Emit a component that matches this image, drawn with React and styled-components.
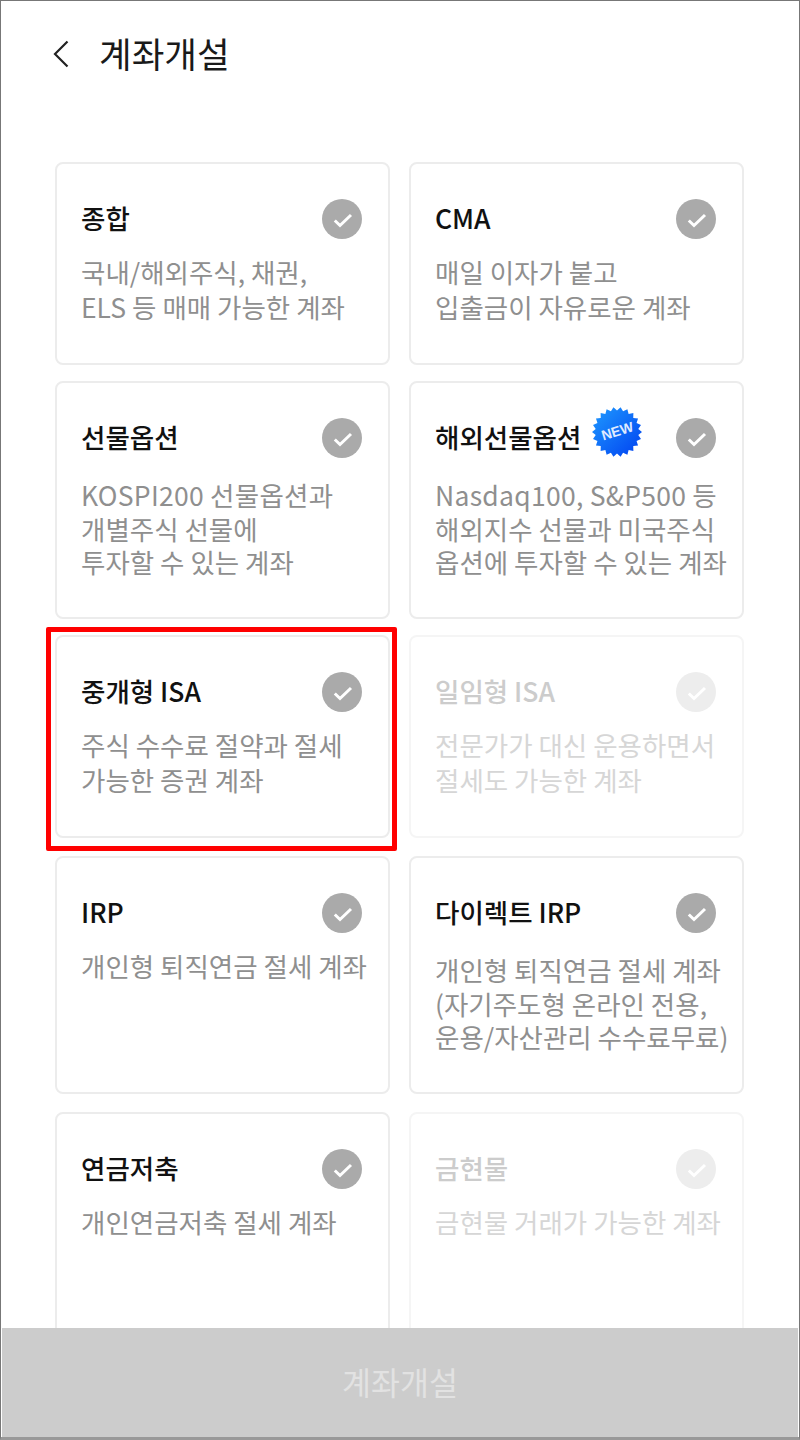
import React from 'react';
import styled, { createGlobalStyle } from 'styled-components';

const GlobalStyle = createGlobalStyle`
  html, body {
    margin: 0;
    padding: 0;
    background: #fff;
  }
  body {
    font-family: "Noto Sans CJK KR", "Noto Sans", sans-serif;
  }
`;

const rows = [
  {
    height: 203,
    gapAfter: 16,
    cards: [
      { title: '종합', lines: ['국내/해외주식, 채권,', 'ELS 등 매매 가능한 계좌'] },
      { title: 'CMA', lines: ['매일 이자가 붙고', '입출금이 자유로운 계좌'] },
    ],
  },
  {
    height: 238,
    gapAfter: 16,
    cards: [
      { title: '선물옵션', lines: ['KOSPI200 선물옵션과', '개별주식 선물에', '투자할 수 있는 계좌'] },
      { title: '해외선물옵션', isNew: true, lines: ['Nasdaq100, S&P500 등', '해외지수 선물과 미국주식', '옵션에 투자할 수 있는 계좌'] },
    ],
  },
  {
    height: 203,
    gapAfter: 18,
    cards: [
      { title: '중개형 ISA', marked: true, lines: ['주식 수수료 절약과 절세', '가능한 증권 계좌'] },
      { title: '일임형 ISA', disabled: true, lines: ['전문가가 대신 운용하면서', '절세도 가능한 계좌'] },
    ],
  },
  {
    height: 238,
    gapAfter: 18,
    cards: [
      { title: 'IRP', lines: ['개인형 퇴직연금 절세 계좌'] },
      { title: '다이렉트 IRP', lines: ['개인형 퇴직연금 절세 계좌', '(자기주도형 온라인 전용,', '운용/자산관리 수수료무료)'] },
    ],
  },
  {
    height: 238,
    gapAfter: 0,
    cards: [
      { title: '연금저축', lines: ['개인연금저축 절세 계좌'] },
      { title: '금현물', disabled: true, lines: ['금현물 거래가 가능한 계좌'] },
    ],
  },
];

// 뱃지 톱니 모양 좌표
const badgePoints = () => {
  const pts = [];
  const teeth = 22;
  for (let i = 0; i < teeth * 2; i++) {
    const r = i % 2 === 0 ? 25 : 21.5;
    const a = (Math.PI * i) / teeth;
    pts.push(`${(25 + r * Math.cos(a)).toFixed(2)},${(25 + r * Math.sin(a)).toFixed(2)}`);
  }
  return pts.join(' ');
};

function CheckMark({ disabled }) {
  return (
    <CheckCircle $disabled={disabled}>
      <svg width="24" height="24" viewBox="0 0 24 24" fill="none">
        <path d="M4.8 13.5 L10 18.5 L21 8" stroke="#fff" strokeWidth="3" />
      </svg>
    </CheckCircle>
  );
}

function NewBadge() {
  return (
    <Badge>
      <svg width="50" height="50" viewBox="0 0 50 50">
        <defs>
          <linearGradient id="badgeFill" x1="0" y1="0" x2="1" y2="1">
            <stop offset="0" stopColor="#1f9bff" />
            <stop offset="1" stopColor="#0040f0" />
          </linearGradient>
        </defs>
        <polygon points={badgePoints()} fill="url(#badgeFill)" />
      </svg>
      <BadgeText>NEW</BadgeText>
    </Badge>
  );
}

function AccountCard({ card }) {
  return (
    <Card $disabled={card.disabled} $marked={card.marked}>
      <CardHead>
        <CardTitle $disabled={card.disabled}>{card.title}</CardTitle>
        {card.isNew && <NewBadge />}
        <CheckMark disabled={card.disabled} />
      </CardHead>
      <CardText $disabled={card.disabled} $dense={card.lines.length === 3}>
        {card.lines.map((line) => (
          <TextLine key={line} $wide={/[A-Za-z]{4}/.test(line)}>{line}</TextLine>
        ))}
      </CardText>
    </Card>
  );
}

export default function App() {
  return (
    <Screen>
      <GlobalStyle />
      <Header>
        <BackButton>
          <svg width="18" height="30" viewBox="0 0 18 30" fill="none">
            <path d="M15.5 2.5 L3 15 L15.5 27.5" stroke="#222" strokeWidth="2.2" />
          </svg>
        </BackButton>
        <PageTitle>계좌개설</PageTitle>
      </Header>
      <CardList>
        {rows.map((row) => (
          <CardRow key={row.cards[0].title} $height={row.height} $gapAfter={row.gapAfter}>
            {row.cards.map((card) => (
              <AccountCard key={card.title} card={card} />
            ))}
          </CardRow>
        ))}
      </CardList>
      <SubmitBar>계좌개설</SubmitBar>
    </Screen>
  );
}

// - estilos

const Screen = styled.div`
  position: relative;
  box-sizing: border-box;
  width: 800px;
  height: 1440px;
  overflow: hidden;
  background: #fff;
  border: 1px solid #777;
  border-bottom: 3px solid #999;
`;

const Header = styled.header`
  display: flex;
  align-items: center;
  height: 106px;
  padding-left: 51px;
`;

const BackButton = styled.div`
  display: flex;
  width: 47px;
`;

const PageTitle = styled.h1`
  margin: -3px 0 0;
  font-size: 35.5px;
  font-weight: 400;
  color: #1a1a1a;
  line-height: 1;
`;

const CardList = styled.div`
  padding: 55px 55px 0 54px;
`;

const CardRow = styled.div`
  display: grid;
  grid-template-columns: 335px 335px;
  column-gap: 19px;
  height: ${(p) => p.$height}px;
  margin-bottom: ${(p) => p.$gapAfter}px;
`;

const Card = styled.div`
  position: relative;
  box-sizing: border-box;
  padding: 35px 26px 0 24px;
  border: 2px solid ${(p) => (p.$disabled ? '#f5f5f5' : '#ececec')};
  border-radius: 8px;
  background: #fff;

  ${(p) =>
    p.$marked &&
    `
    &::after {
      content: '';
      position: absolute;
      top: -10px;
      left: -11px;
      right: -9px;
      bottom: -15px;
      border: 5px solid #f00;
      border-radius: 2px;
    }
  `}
`;

const CardHead = styled.div`
  display: flex;
  align-items: center;
  height: 40px;
`;

const CardTitle = styled.div`
  margin-top: -4px;
  font-size: 26.5px;
  font-weight: 500;
  color: ${(p) => (p.$disabled ? '#ccc' : '#111')};
`;

const CheckCircle = styled.div`
  display: flex;
  align-items: center;
  justify-content: center;
  width: 40px;
  height: 40px;
  margin-left: auto;
  border-radius: 50%;
  background: ${(p) => (p.$disabled ? '#ededed' : '#aaa')};
`;

const Badge = styled.div`
  position: relative;
  width: 50px;
  height: 50px;
  margin: -12px 0 0 11px;
`;

const BadgeText = styled.span`
  position: absolute;
  top: 15px;
  left: 9px;
  font-family: "Liberation Sans", sans-serif;
  font-size: 14px;
  font-weight: 700;
  line-height: 18px;
  color: #dfeaff;
  transform: rotate(-17deg);
`;

const CardText = styled.div`
  margin-top: ${(p) => (p.$dense ? 20 : 16)}px;
  font-size: 26.5px;
  line-height: ${(p) => (p.$dense ? 33.7 : 34.5)}px;
  color: ${(p) => (p.$disabled ? '#d6d6d6' : '#8f8f8f')};
  white-space: nowrap;
`;

const TextLine = styled.div`
  letter-spacing: ${(p) => (p.$wide ? '0.28px' : 'normal')};
`;

const SubmitBar = styled.div`
  position: absolute;
  left: 1px;
  right: 1px;
  bottom: 0;
  height: 109px;
  display: flex;
  align-items: center;
  justify-content: center;
  padding-bottom: 3px;
  box-sizing: border-box;
  background: #ccc;
  font-size: 31.5px;
  color: #e2e2e2;
`;
